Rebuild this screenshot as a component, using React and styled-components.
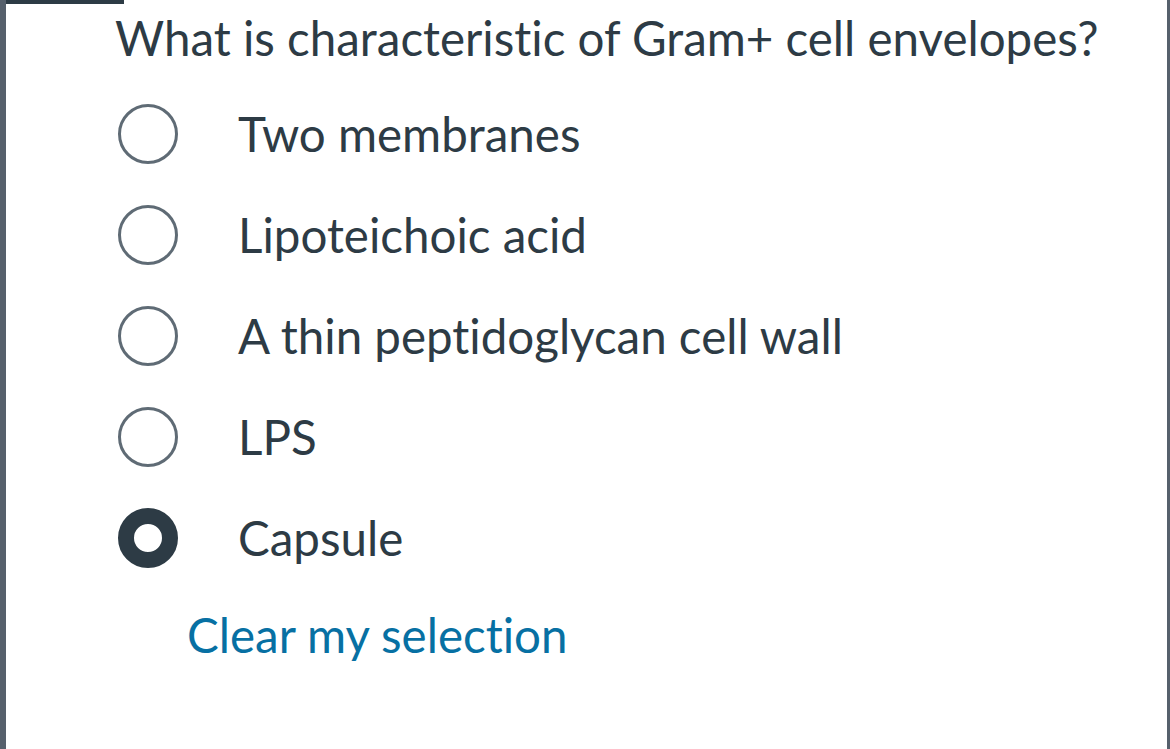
import React, { useState } from "react";
import styled, { createGlobalStyle } from "styled-components";

const GlobalStyle = createGlobalStyle`
  html, body {
    margin: 0;
    padding: 0;
    background: #ffffff;
  }
  body {
    font-family: Lato, "Noto Sans", sans-serif;
    font-variant-ligatures: none;
    color: #2d3b45;
  }
`;

const Frame = styled.div`
  box-sizing: border-box;
  height: 749px;
  background: #ffffff;
  border-left: 6px solid #56606c;
  border-right: 3px solid #56606c;
  overflow: hidden;
`;

const TopTab = styled.div`
  width: 118px;
  height: 4px;
  background: #2d3b45;
`;

const Question = styled.h1`
  margin: 6px 0 0 109px;
  font-size: 47.5px;
  font-weight: 400;
  line-height: 56px;
  color: #2d3b45;
`;

const OptionList = styled.div`
  display: flex;
  flex-direction: column;
  margin: 17px 0 0 112px;
`;

const Row = styled.label`
  display: flex;
  align-items: center;
  gap: 60px;
  height: 101px;
  cursor: pointer;
`;

const Radio = styled.span`
  box-sizing: border-box;
  flex: 0 0 auto;
  width: 60px;
  height: 60px;
  border-radius: 50%;
  border: ${(p) => (p.checked ? "16px solid #2d3b45" : "3px solid #5f6b75")};
  background: #ffffff;
  box-shadow: ${(p) => (p.checked ? "inset 0 0 0 1px #ffffff" : "none")};
`;

const OptionText = styled.span`
  font-size: 47.5px;
  line-height: 56px;
  color: #2d3b45;
`;

const ClearLink = styled.a`
  display: block;
  margin: 19px 0 0 181px;
  font-size: 47.5px;
  line-height: 56px;
  color: #0770a3;
  text-decoration: none;
  cursor: pointer;
`;

const options = [
  "Two membranes",
  "Lipoteichoic acid",
  "A thin peptidoglycan cell wall",
  "LPS",
  "Capsule",
];

export default function App() {
  const [selected, setSelected] = useState(4);
  return (
    <>
      <GlobalStyle />
      <Frame>
        <TopTab />
        <Question>What is characteristic of Gram+ cell envelopes?</Question>
        <OptionList>
          {options.map((text, i) => (
            <Row key={text} onClick={() => setSelected(i)}>
              <Radio checked={selected === i} />
              <OptionText>{text}</OptionText>
            </Row>
          ))}
        </OptionList>
        <ClearLink onClick={() => setSelected(null)}>Clear my selection</ClearLink>
      </Frame>
    </>
  );
}
